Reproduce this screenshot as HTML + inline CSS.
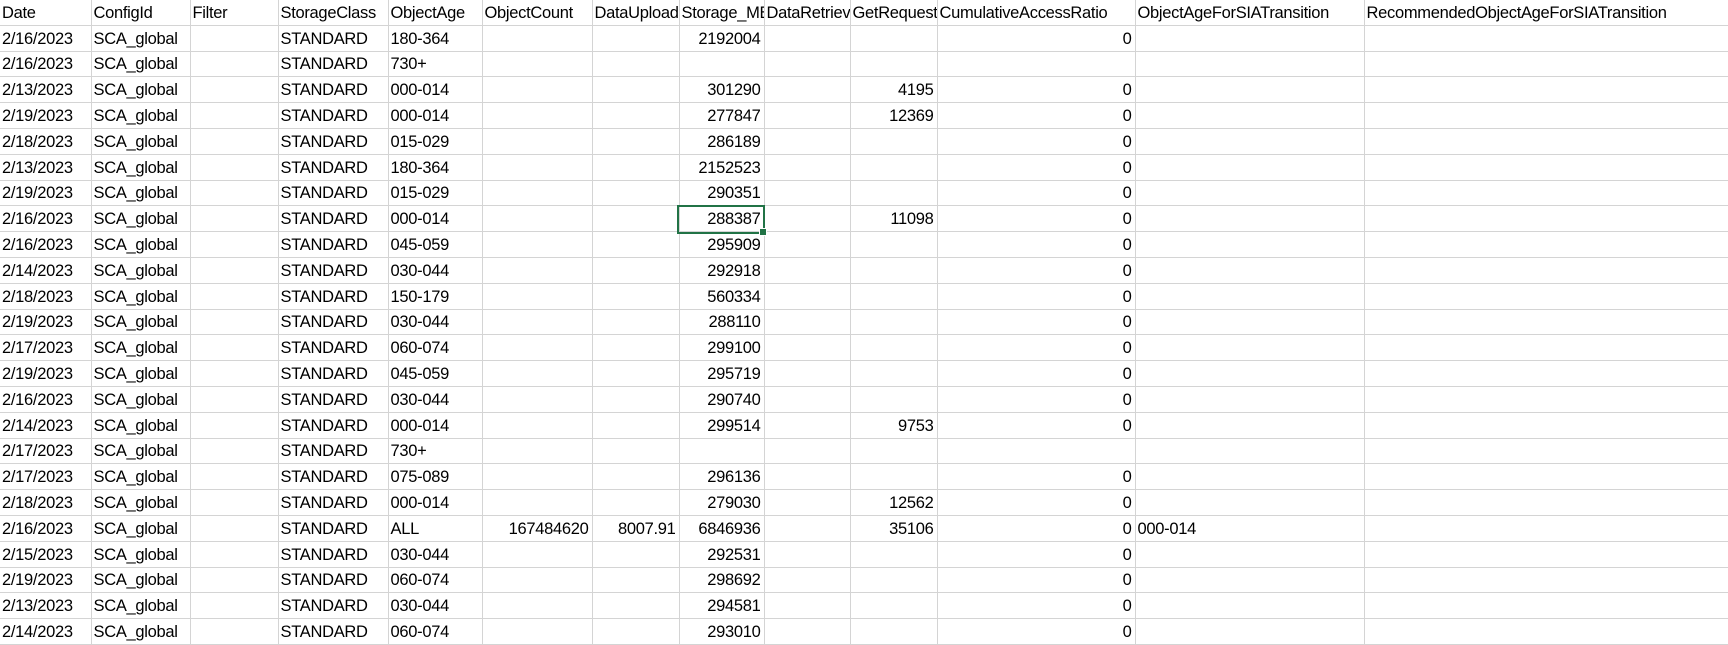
<!DOCTYPE html>
<html><head><meta charset="utf-8"><style>
html,body{margin:0;padding:0;background:#fff;width:1728px;height:632px;overflow:hidden}
table{border-collapse:collapse;table-layout:fixed;width:1728px;font-family:"Liberation Sans",sans-serif;font-size:16.5px;letter-spacing:-0.3px;color:#000;position:absolute;left:0;top:0}
td{border-right:1px solid #d4d4d4;border-bottom:1px solid #d4d4d4;padding:0 3px 1px 2px;white-space:nowrap;overflow:hidden;text-overflow:clip;height:25.8px;box-sizing:border-box;line-height:22px;vertical-align:bottom}
tr{height:25.8px}
tr.h,tr.h td{height:25.4px}
td.r{text-align:right}
#sel{position:absolute;left:677px;top:205px;width:84px;height:25px;border:2px solid #217346}
#hd{position:absolute;left:759px;top:228px;width:6px;height:6px;background:#217346;border:1px solid #fff}
</style></head><body>
<table>
<colgroup><col style="width:91px"><col style="width:99px"><col style="width:88px"><col style="width:110px"><col style="width:94px"><col style="width:110px"><col style="width:87px"><col style="width:85px"><col style="width:86px"><col style="width:87px"><col style="width:198px"><col style="width:229px"><col style="width:364px"></colgroup>
<tr class="h"><td>Date</td><td>ConfigId</td><td>Filter</td><td>StorageClass</td><td>ObjectAge</td><td>ObjectCount</td><td>DataUploaded</td><td>Storage_MB</td><td>DataRetrieved</td><td>GetRequests</td><td>CumulativeAccessRatio</td><td>ObjectAgeForSIATransition</td><td>RecommendedObjectAgeForSIATransition</td></tr>
<tr><td>2/16/2023</td><td>SCA_global</td><td></td><td>STANDARD</td><td>180-364</td><td></td><td></td><td class="r">2192004</td><td></td><td></td><td class="r">0</td><td></td><td></td></tr>
<tr><td>2/16/2023</td><td>SCA_global</td><td></td><td>STANDARD</td><td>730+</td><td></td><td></td><td></td><td></td><td></td><td></td><td></td><td></td></tr>
<tr><td>2/13/2023</td><td>SCA_global</td><td></td><td>STANDARD</td><td>000-014</td><td></td><td></td><td class="r">301290</td><td></td><td class="r">4195</td><td class="r">0</td><td></td><td></td></tr>
<tr><td>2/19/2023</td><td>SCA_global</td><td></td><td>STANDARD</td><td>000-014</td><td></td><td></td><td class="r">277847</td><td></td><td class="r">12369</td><td class="r">0</td><td></td><td></td></tr>
<tr><td>2/18/2023</td><td>SCA_global</td><td></td><td>STANDARD</td><td>015-029</td><td></td><td></td><td class="r">286189</td><td></td><td></td><td class="r">0</td><td></td><td></td></tr>
<tr><td>2/13/2023</td><td>SCA_global</td><td></td><td>STANDARD</td><td>180-364</td><td></td><td></td><td class="r">2152523</td><td></td><td></td><td class="r">0</td><td></td><td></td></tr>
<tr><td>2/19/2023</td><td>SCA_global</td><td></td><td>STANDARD</td><td>015-029</td><td></td><td></td><td class="r">290351</td><td></td><td></td><td class="r">0</td><td></td><td></td></tr>
<tr><td>2/16/2023</td><td>SCA_global</td><td></td><td>STANDARD</td><td>000-014</td><td></td><td></td><td class="r">288387</td><td></td><td class="r">11098</td><td class="r">0</td><td></td><td></td></tr>
<tr><td>2/16/2023</td><td>SCA_global</td><td></td><td>STANDARD</td><td>045-059</td><td></td><td></td><td class="r">295909</td><td></td><td></td><td class="r">0</td><td></td><td></td></tr>
<tr><td>2/14/2023</td><td>SCA_global</td><td></td><td>STANDARD</td><td>030-044</td><td></td><td></td><td class="r">292918</td><td></td><td></td><td class="r">0</td><td></td><td></td></tr>
<tr><td>2/18/2023</td><td>SCA_global</td><td></td><td>STANDARD</td><td>150-179</td><td></td><td></td><td class="r">560334</td><td></td><td></td><td class="r">0</td><td></td><td></td></tr>
<tr><td>2/19/2023</td><td>SCA_global</td><td></td><td>STANDARD</td><td>030-044</td><td></td><td></td><td class="r">288110</td><td></td><td></td><td class="r">0</td><td></td><td></td></tr>
<tr><td>2/17/2023</td><td>SCA_global</td><td></td><td>STANDARD</td><td>060-074</td><td></td><td></td><td class="r">299100</td><td></td><td></td><td class="r">0</td><td></td><td></td></tr>
<tr><td>2/19/2023</td><td>SCA_global</td><td></td><td>STANDARD</td><td>045-059</td><td></td><td></td><td class="r">295719</td><td></td><td></td><td class="r">0</td><td></td><td></td></tr>
<tr><td>2/16/2023</td><td>SCA_global</td><td></td><td>STANDARD</td><td>030-044</td><td></td><td></td><td class="r">290740</td><td></td><td></td><td class="r">0</td><td></td><td></td></tr>
<tr><td>2/14/2023</td><td>SCA_global</td><td></td><td>STANDARD</td><td>000-014</td><td></td><td></td><td class="r">299514</td><td></td><td class="r">9753</td><td class="r">0</td><td></td><td></td></tr>
<tr><td>2/17/2023</td><td>SCA_global</td><td></td><td>STANDARD</td><td>730+</td><td></td><td></td><td></td><td></td><td></td><td></td><td></td><td></td></tr>
<tr><td>2/17/2023</td><td>SCA_global</td><td></td><td>STANDARD</td><td>075-089</td><td></td><td></td><td class="r">296136</td><td></td><td></td><td class="r">0</td><td></td><td></td></tr>
<tr><td>2/18/2023</td><td>SCA_global</td><td></td><td>STANDARD</td><td>000-014</td><td></td><td></td><td class="r">279030</td><td></td><td class="r">12562</td><td class="r">0</td><td></td><td></td></tr>
<tr><td>2/16/2023</td><td>SCA_global</td><td></td><td>STANDARD</td><td>ALL</td><td class="r">167484620</td><td class="r">8007.91</td><td class="r">6846936</td><td></td><td class="r">35106</td><td class="r">0</td><td>000-014</td><td></td></tr>
<tr><td>2/15/2023</td><td>SCA_global</td><td></td><td>STANDARD</td><td>030-044</td><td></td><td></td><td class="r">292531</td><td></td><td></td><td class="r">0</td><td></td><td></td></tr>
<tr><td>2/19/2023</td><td>SCA_global</td><td></td><td>STANDARD</td><td>060-074</td><td></td><td></td><td class="r">298692</td><td></td><td></td><td class="r">0</td><td></td><td></td></tr>
<tr><td>2/13/2023</td><td>SCA_global</td><td></td><td>STANDARD</td><td>030-044</td><td></td><td></td><td class="r">294581</td><td></td><td></td><td class="r">0</td><td></td><td></td></tr>
<tr><td>2/14/2023</td><td>SCA_global</td><td></td><td>STANDARD</td><td>060-074</td><td></td><td></td><td class="r">293010</td><td></td><td></td><td class="r">0</td><td></td><td></td></tr>
</table>
<div id="sel"></div><div id="hd"></div>
</body></html>
